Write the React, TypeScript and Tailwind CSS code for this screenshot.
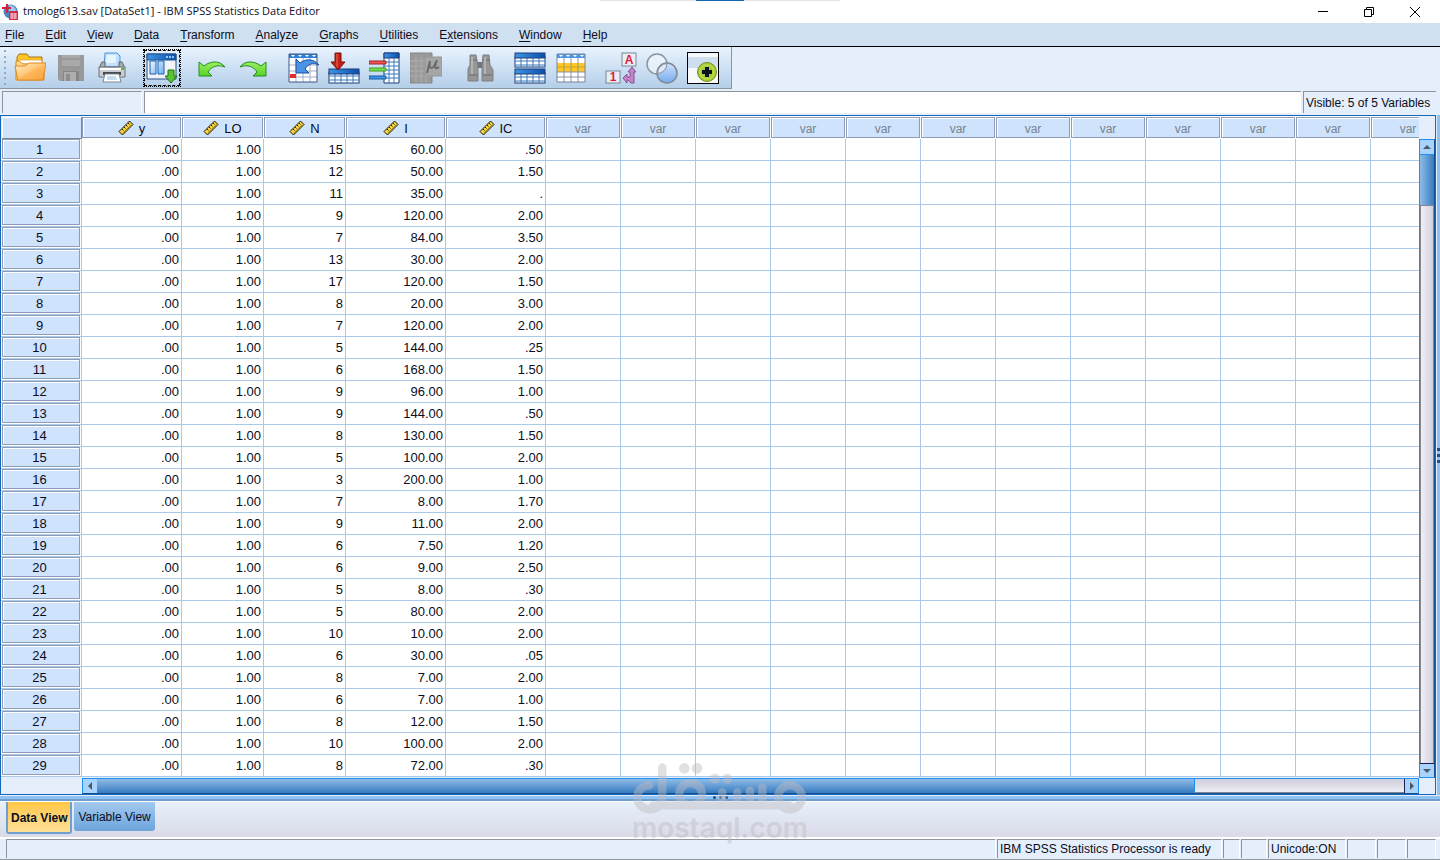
import type { ReactNode } from "react";

type DataRow = [string, string, string, string, string];

interface Column {
  name: string;
  colClass: string;
}

const COLUMNS: Column[] = [
  { name: "y", colClass: "w-[100px]" },
  { name: "LO", colClass: "w-[82px]" },
  { name: "N", colClass: "w-[82px]" },
  { name: "I", colClass: "w-[100px]" },
  { name: "IC", colClass: "w-[100px]" },
];

const EMPTY_COLUMNS = Array.from({ length: 12 }, (_, i) => i);

const ROWS: DataRow[] = [
  [".00", "1.00", "15", "60.00", ".50"],
  [".00", "1.00", "12", "50.00", "1.50"],
  [".00", "1.00", "11", "35.00", "."],
  [".00", "1.00", "9", "120.00", "2.00"],
  [".00", "1.00", "7", "84.00", "3.50"],
  [".00", "1.00", "13", "30.00", "2.00"],
  [".00", "1.00", "17", "120.00", "1.50"],
  [".00", "1.00", "8", "20.00", "3.00"],
  [".00", "1.00", "7", "120.00", "2.00"],
  [".00", "1.00", "5", "144.00", ".25"],
  [".00", "1.00", "6", "168.00", "1.50"],
  [".00", "1.00", "9", "96.00", "1.00"],
  [".00", "1.00", "9", "144.00", ".50"],
  [".00", "1.00", "8", "130.00", "1.50"],
  [".00", "1.00", "5", "100.00", "2.00"],
  [".00", "1.00", "3", "200.00", "1.00"],
  [".00", "1.00", "7", "8.00", "1.70"],
  [".00", "1.00", "9", "11.00", "2.00"],
  [".00", "1.00", "6", "7.50", "1.20"],
  [".00", "1.00", "6", "9.00", "2.50"],
  [".00", "1.00", "5", "8.00", ".30"],
  [".00", "1.00", "5", "80.00", "2.00"],
  [".00", "1.00", "10", "10.00", "2.00"],
  [".00", "1.00", "6", "30.00", ".05"],
  [".00", "1.00", "8", "7.00", "2.00"],
  [".00", "1.00", "6", "7.00", "1.00"],
  [".00", "1.00", "8", "12.00", "1.50"],
  [".00", "1.00", "10", "100.00", "2.00"],
  [".00", "1.00", "8", "72.00", ".30"],
];

// [mnemonic prefix, underlined letter, rest]
const MENUS: [string, string, string][] = [
  ["", "F", "ile"],
  ["", "E", "dit"],
  ["", "V", "iew"],
  ["", "D", "ata"],
  ["", "T", "ransform"],
  ["", "A", "nalyze"],
  ["", "G", "raphs"],
  ["", "U", "tilities"],
  ["E", "x", "tensions"],
  ["", "W", "indow"],
  ["", "H", "elp"],
];

const Icon = ({ children }: { children: ReactNode }) => (
  <svg width="32" height="32" viewBox="0 0 32 32" aria-hidden="true">
    {children}
  </svg>
);

const Gradients = () => (
  <svg width="0" height="0" className="absolute" aria-hidden="true">
    <defs>
      <linearGradient id="folder" x1="0" y1="0" x2="1" y2="1">
        <stop offset="0" stopColor="#fff0c4" />
        <stop offset="0.5" stopColor="#ffc578" />
        <stop offset="1" stopColor="#f89a2c" />
      </linearGradient>
      <linearGradient id="blueBar" x1="0" y1="0" x2="1" y2="0">
        <stop offset="0" stopColor="#3f95e4" />
        <stop offset="1" stopColor="#0a4fae" />
      </linearGradient>
      <linearGradient id="pane" x1="0" y1="0" x2="1" y2="1">
        <stop offset="0" stopColor="#eef7ff" />
        <stop offset="1" stopColor="#6fb3ee" />
      </linearGradient>
      <linearGradient id="leaf" x1="0" y1="0" x2="0" y2="1">
        <stop offset="0" stopColor="#9bf060" />
        <stop offset="1" stopColor="#55d326" />
      </linearGradient>
      <linearGradient id="lens" x1="0" y1="0" x2="0" y2="1">
        <stop offset="0" stopColor="#cfe2fc" />
        <stop offset="1" stopColor="#6ea6ee" />
      </linearGradient>
    </defs>
  </svg>
);

const OpenIcon = () => (
  <Icon>
    <path d="M3 7V5l2-3h8l2 3h13v8H3z" fill="#ffc526" stroke="#a87512" />
    <path d="M5 8h22l2 4H4z" fill="#fff" stroke="#d8a13a" strokeWidth=".7" />
    <path d="M2 9h3l4 3h21v16H2z" fill="#ffd98c" stroke="#d98918" />
    <path d="M1 14h10l4-3h17l-3 17H4z" fill="url(#folder)" stroke="#df8a20" />
    <path d="M5 26L30 12l-2 15H5z" fill="#ffab42" opacity=".45" />
  </Icon>
);

const SaveIcon = () => (
  <Icon>
    <path d="M3 3h26v26H5l-2-2z" fill="#999" />
    <path d="M7 3h18v12H7z" fill="#a9a9a9" />
    <path d="M7 7h18M7 15h18" stroke="#8b8b8b" />
    <path d="M8 19h16v10H8z" fill="#858585" />
    <path d="M9 20h12v9H9z" fill="#adadad" />
    <path d="M11 22h4v7h-4z" fill="#8d8d8d" />
  </Icon>
);

const PrintIcon = () => (
  <Icon>
    <path d="M9 1h12l3 3v11H8z" fill="#bfe1ff" stroke="#4b95d8" />
    <path d="M11 3h9v8H10z" fill="#e8f5ff" />
    <path d="M6 10h3v5h14v-5h3l3 6H3z" fill="#a9adb2" stroke="#60656b" />
    <path d="M3 15h26v10H3z" fill="#c9ccd0" stroke="#70757b" />
    <path d="M4 17h24" stroke="#fff" strokeWidth="2" />
    <path d="M7 20h18v3H7z" fill="#45494e" />
    <path d="M25 17h3" stroke="#43c62d" strokeWidth="2" />
    <path d="M9 22h14l2 8H7z" fill="#fff" stroke="#7d8892" />
    <path d="M11 25h9M11 27h10" stroke="#8fbce3" />
  </Icon>
);

const RecallIcon = () => (
  <Icon>
    <path d="M1 2h29v25H1z" fill="#f1f3f8" stroke="#245187" />
    <path d="M1 2h29v6H1z" fill="url(#blueBar)" stroke="#245187" />
    <path d="M20 5h2m1 0h2m1 0h2" stroke="#8fc4f5" strokeWidth="2" />
    <path d="M4 9h6v13H4zM12 9h6v13h-6z" fill="url(#pane)" stroke="#1763b6" />
    <path d="M22 18h6v6h3l-6 7-6-7h3z" fill="#5bc234" stroke="#177317" />
  </Icon>
);

const UndoIcon = () => (
  <Icon>
    <path
      d="M3 10v14h13l-4-4c3-5 9-8 17-5-5-7-15-6-21-1z"
      fill="url(#leaf)"
      stroke="#248c24"
    />
  </Icon>
);

const RedoIcon = () => (
  <Icon>
    <path
      d="M29 10v14H16l4-4C17 15 11 12 3 15c5-7 15-6 21-1z"
      fill="url(#leaf)"
      stroke="#248c24"
    />
  </Icon>
);

const GotoIcon = () => (
  <Icon>
    <path d="M2 2h28v28H2z" fill="#fff" />
    <path d="M2 2h28v4H2z" fill="#2e82d6" />
    <path d="M4 3h4L6 5zM11 3h4l-2 2zM18 3h4l-2 2zM25 3h4l-2 2z" fill="#fff" />
    <path d="M9 6v24M16 6v24M23 6v24M2 13h28M2 19h28M2 25h28" stroke="#a6aec6" />
    <path d="M2 2h28v28H2z" fill="none" stroke="#3c5684" />
    <path d="M3 22h6v4H3z" fill="#e62b2b" />
    <path
      d="M9 7v14h13l-4-4c3-5 8-7 14-4-5-6-13-7-19-2z"
      fill="#4a94e8"
      stroke="#1b4f9a"
    />
  </Icon>
);

const GridBody = ({ x, y, w, h }: { x: number; y: number; w: number; h: number }) => (
  <>
    <rect x={x} y={y} width={w} height={h} fill="#fff" stroke="#1d3f7a" />
    <path
      d={`M${x + 6} ${y}v${h}M${x + 12} ${y}v${h}M${x + 18} ${y}v${h}M${x + 24} ${y}v${h}M${x} ${y + 4}h${w}M${x} ${y + 8}h${w}`}
      stroke="#3978bd"
    />
  </>
);

const InsertCaseIcon = () => (
  <Icon>
    <GridBody x={1} y={20} w={30} h={11} />
    <rect x="1" y="17" width="30" height="5" fill="url(#blueBar)" stroke="#1d3f7a" />
    <path d="M7 1h6v9h4l-7 8-7-8h4z" fill="#c61f16" stroke="#701009" />
    <path d="M9 2v13" stroke="#ef6b58" />
  </Icon>
);

const InsertVarIcon = () => (
  <Icon>
    <path d="M15 1h15v30H15z" fill="#fff" stroke="#1d3f7a" />
    <path d="M15 1h15v5H15z" fill="url(#blueBar)" stroke="#1d3f7a" />
    <path d="M20 6v25M25 6v25M15 10h15M15 14h15M15 18h15M15 22h15M15 26h15" stroke="#3978bd" />
    <path d="M0 9h17v3H0z" fill="#ef5948" stroke="#a51d30" />
    <path d="M0 16h17v3H0z" fill="#7ae04e" stroke="#3a9d20" />
    <path d="M0 24h17v3H0z" fill="#3d97e6" stroke="#1759a5" />
  </Icon>
);

const StatsIcon = () => (
  <Icon>
    <path d="M0 1h22v30H0z" fill="#9a9a9a" stroke="#858585" />
    <path d="M6 5v26M11 5v26M16 5v26M0 9h22M0 14h22M0 19h22M0 24h22" stroke="#adadad" />
    <path d="M15 5h17v19H15z" fill="#a6a6a6" stroke="#969696" />
    <path d="M20 9l-3 12m3-12c-2 9 3 9 6 1m1-2c-3 8-2 10 2 7" fill="none" stroke="#6a6a6a" strokeWidth="2" />
  </Icon>
);

const FindIcon = () => (
  <Icon>
    <path d="M13 10h7v6h-7z" fill="#747474" />
    <path d="M6 3h6l2 11v15H4V17l2-4zM19 3h6l1 10 3 5v11H18V14z" fill="#969696" stroke="#7e7e7e" />
    <path d="M6 8h7M19 8h7M5 23h9M19 23h9" stroke="#6d6d6d" />
    <path d="M8 5v17M21 5v17" stroke="#b3b3b3" strokeWidth="2" />
  </Icon>
);

const SplitIcon = () => (
  <Icon>
    <GridBody x={1} y={5} w={30} h={10} />
    <rect x="1" y="1" width="30" height="5" fill="url(#blueBar)" stroke="#1d3f7a" />
    <GridBody x={1} y={21} w={30} h={10} />
    <rect x="1" y="17" width="30" height="5" fill="url(#blueBar)" stroke="#1d3f7a" />
  </Icon>
);

const SelectIcon = () => (
  <Icon>
    <path d="M2 2h28v28H2z" fill="#fff" />
    <path d="M2 2h28v4H2z" fill="#4b98df" />
    <path d="M4 3h4L6 5zM11 3h4l-2 2zM18 3h4l-2 2zM25 3h4l-2 2z" fill="#fff" />
    <path d="M2 11h28v9H2z" fill="#ffc91e" />
    <path d="M9 6v24M16 6v24M23 6v24M2 25h28M2 20h28" stroke="#8d91a6" />
    <path d="M2 15h28" stroke="#c99d2c" />
    <path d="M2 2h28v28H2z" fill="none" stroke="#7884a4" />
  </Icon>
);

const LabelsIcon = () => (
  <Icon>
    <rect x="17" y="1" width="14" height="13" fill="#e9eef5" stroke="#7c8594" />
    <rect x="1" y="19" width="14" height="12" fill="#e9eef5" stroke="#7c8594" />
    <text x="24" y="12" textAnchor="middle" fontSize="12" fontWeight="bold" fill="#df1b3d" fontFamily="Liberation Sans, sans-serif">A</text>
    <text x="8" y="29" textAnchor="middle" fontSize="12" fontWeight="bold" fill="#df1b3d" fontFamily="Liberation Sans, sans-serif">1</text>
    <path d="M27 15l4 5h-2v11h-3l-3-3h-1v3l-4-5 4-4v3h3v-5h-2z" fill="#c582ca" stroke="#865290" />
  </Icon>
);

const SetsIcon = () => (
  <Icon>
    <circle cx="11" cy="12" r="10" fill="#eef5fd" fillOpacity=".7" stroke="#8d949c" strokeWidth="1.5" />
    <circle cx="21" cy="21" r="10" fill="url(#lens)" fillOpacity=".9" stroke="#80888f" strokeWidth="1.5" />
    <path d="M21 11.500A10 10 0 0 1 11.500 21.500A10 10 0 0 1 21 11.500z" fill="#dce9fb" stroke="#8d949c" />
  </Icon>
);

const CustomIcon = () => (
  <Icon>
    <rect x=".5" y="1.500" width="31" height="30" fill="#f7fafc" />
    <path d="M1 5h30v11H1z" fill="#cfdfef" />
    <circle cx="20" cy="20" r="9.500" fill="#a6cd32" stroke="#738d25" />
    <circle cx="20" cy="20" r="7" fill="none" stroke="#c9e461" />
    <path d="M18 15h4v3h3v4h-3v3h-4v-3h-3v-4h3z" fill="#0d1220" />
    <rect x=".5" y=".5" width="31" height="31" fill="none" stroke="#000" />
  </Icon>
);

const AppIcon = () => (
  <svg width="16" height="16" viewBox="0 0 16 16" aria-hidden="true">
    <circle cx="8.500" cy="7.500" r="7" fill="#4d86c0" />
    <path d="M7 1c4 0 7 3 7 6H7z" fill="#a3c6e4" />
    <path d="M5 0v9M0 4h9" stroke="#d8203c" strokeWidth="2" />
    <rect x="7" y="7" width="9" height="9" fill="#d4294a" />
    <path d="M8 10h7M8 12h7M8 14h7M10 9v6M13 9v6" stroke="#fff" strokeWidth=".7" />
  </svg>
);

const RulerIcon = () => (
  <svg width="16" height="16" viewBox="0 0 16 16" aria-hidden="true">
    <path d="M1 11.500L11.500 1l3.500 3.500L4.500 15z" fill="#f8d33a" stroke="#1d1a10" />
    <path d="M4 9l1.500 1.500M6 7l1.500 1.500M8 5l1.500 1.500M10 3l1.500 1.500" stroke="#1d1a10" />
    <path d="M4.500 13.500l9-9" stroke="#b08a14" />
  </svg>
);

interface ToolButtonProps {
  label: string;
  icon: ReactNode;
  focused?: boolean;
}

const ToolButton = ({ label, icon, focused }: ToolButtonProps) => (
  <button
    type="button"
    aria-label={label}
    className="flex h-10 w-[41px] items-center justify-center"
  >
    {focused ? (
      <span className="flex h-9 w-9 items-center justify-center border border-dashed border-black outline outline-dotted outline-black">
        {icon}
      </span>
    ) : (
      icon
    )}
  </button>
);

const TitleBar = () => (
  <header className="relative flex h-[23px] shrink-0 items-center bg-white px-[2px]">
    <div className="absolute top-0 left-1/2 flex h-px w-60 -translate-x-1/2 justify-center bg-[#e4e4ea]">
      <div className="w-12 bg-[#1465b8]" />
    </div>
    <AppIcon />
    <h1 className="ml-[5px] font-['Open_Sans',sans-serif] text-[11px]">
      tmolog613.sav [DataSet1] - IBM SPSS Statistics Data Editor
    </h1>
    <div className="ml-auto flex">
      <button type="button" aria-label="Minimize" className="flex w-[46px] justify-center">
        <svg width="12" height="12" viewBox="0 0 12 12"><path d="M1 5.500h10" stroke="#000" /></svg>
      </button>
      <button type="button" aria-label="Restore" className="flex w-[46px] justify-center">
        <svg width="12" height="12" viewBox="0 0 12 12"><path d="M1.500 3.500h7v7h-7zM3.500 3V1.500h7v7H9" fill="none" stroke="#000" /></svg>
      </button>
      <button type="button" aria-label="Close" className="flex w-[46px] justify-center">
        <svg width="12" height="12" viewBox="0 0 12 12"><path d="M1 1l10 10M11 1L1 11" stroke="#000" /></svg>
      </button>
    </div>
  </header>
);

const MenuBar = () => (
  <nav className="flex h-6 shrink-0 items-center gap-[21px] border-b border-black bg-[#cfe0f1] pl-[5px]">
    {MENUS.map(([before, key, after]) => (
      <button key={before + key + after} type="button">
        {before}
        <span className="underline underline-offset-2">{key}</span>
        {after}
      </button>
    ))}
  </nav>
);

const ToolBar = () => (
  <div className="flex h-[42px] shrink-0">
    <div
      role="toolbar"
      className="flex items-center gap-[9px] border-r border-b border-[#8f959c] bg-linear-to-b from-[#e9f3fe] to-[#b4cfe9] pr-2"
    >
      <div className="-mr-[9px] flex h-full w-[9px] flex-col items-center justify-evenly">
        {[0, 1, 2, 3, 4, 5, 6].map((dot) => (
          <span key={dot} className="size-[2px] bg-[#93a9c4]" />
        ))}
      </div>
      <div className="flex">
        <ToolButton label="Open" icon={<OpenIcon />} />
        <ToolButton label="Save" icon={<SaveIcon />} />
        <ToolButton label="Print" icon={<PrintIcon />} />
      </div>
      <ToolButton label="Recall dialogs" icon={<RecallIcon />} focused />
      <div className="flex">
        <ToolButton label="Undo" icon={<UndoIcon />} />
        <ToolButton label="Redo" icon={<RedoIcon />} />
      </div>
      <div className="flex">
        <ToolButton label="Go to case" icon={<GotoIcon />} />
        <ToolButton label="Insert case" icon={<InsertCaseIcon />} />
        <ToolButton label="Insert variable" icon={<InsertVarIcon />} />
        <ToolButton label="Descriptives" icon={<StatsIcon />} />
      </div>
      <div className="ml-1">
        <ToolButton label="Find" icon={<FindIcon />} />
      </div>
      <div className="flex">
        <ToolButton label="Split file" icon={<SplitIcon />} />
        <ToolButton label="Select cases" icon={<SelectIcon />} />
      </div>
      <div className="flex">
        <ToolButton label="Value labels" icon={<LabelsIcon />} />
        <ToolButton label="Variable sets" icon={<SetsIcon />} />
        <ToolButton label="Customize toolbar" icon={<CustomIcon />} />
      </div>
    </div>
  </div>
);

const CellEditor = () => (
  <div className="flex h-[26px] shrink-0 gap-[2px] pt-[2px] pr-1 pb-[2px] pl-[2px]">
    <div className="w-[140px] border-t border-l border-r border-[#8f959c] border-r-white" />
    <input
      type="text"
      aria-label="Cell value"
      className="min-w-0 flex-1 border-t border-l border-[#8f959c] bg-white px-1 outline-none"
    />
    <div className="flex w-[133px] items-center border-t border-l border-[#8f959c] px-[2px] whitespace-nowrap">
      Visible: 5 of 5 Variables
    </div>
  </div>
);

const HEAD_BOX =
  "mr-px flex h-[21px] items-center justify-center border border-[#8e9cb8] bg-[#cfe3fc] shadow-[inset_1px_1px_0_#fff]";
const ROW_BOX =
  "mx-px h-5 border border-[#8e9cb8] bg-[#cfe3fc] pr-[3px] text-center leading-[19px] shadow-[inset_1px_1px_0_#fff]";
const CELL = "border-r border-b border-[#abc9e9] bg-white p-0";

const DataGrid = () => (
  <div className="min-h-0 flex-1 overflow-hidden">
    <table className="w-[1445px] table-fixed border-separate border-spacing-0 text-[13px]">
      <colgroup>
        <col className="w-[81px]" />
        {COLUMNS.map((column) => (
          <col key={column.name} className={column.colClass} />
        ))}
        {EMPTY_COLUMNS.map((i) => (
          <col key={i} className="w-[75px]" />
        ))}
      </colgroup>
      <thead>
        <tr className="h-[23px]">
          <td className="p-0">
            <div className="ml-px h-[22px] border-r border-b border-[#7e8797] bg-[#cfe3fc] shadow-[inset_1px_1px_0_#fff]" />
          </td>
          {COLUMNS.map((column) => (
            <th key={column.name} scope="col" className="bg-white p-0 font-normal">
              <div className={HEAD_BOX}>
                <RulerIcon />
                <span className="ml-[5px] pt-[3px] leading-4">{column.name}</span>
              </div>
            </th>
          ))}
          {EMPTY_COLUMNS.map((i) => (
            <th key={i} scope="col" className="bg-white p-0 text-xs font-normal text-[#76838f]">
              <div className={`${HEAD_BOX} pt-[2px]`}>var</div>
            </th>
          ))}
        </tr>
      </thead>
      <tbody>
        {ROWS.map((row, index) => (
          <tr key={index} className="h-[22px]">
            <th scope="row" className={`${CELL} align-top font-normal`}>
              <div className={ROW_BOX}>{index + 1}</div>
            </th>
            {row.map((value, i) => (
              <td key={i} className={`${CELL} pr-[2px] text-right leading-5`}>
                {value}
              </td>
            ))}
            {EMPTY_COLUMNS.map((i) => (
              <td key={i} className={CELL} />
            ))}
          </tr>
        ))}
      </tbody>
    </table>
  </div>
);

const VerticalScroll = () => (
  <div className="flex w-4 shrink-0 flex-col pt-[23px]">
    <div className="flex min-h-0 flex-1 flex-col border border-[#1e8ff5] border-r-[#14508f] bg-[#e0e0ec]">
      <button type="button" aria-label="Scroll up" className="flex h-[14px] items-center justify-center bg-[#a9d2fc]">
        <svg width="10" height="6" viewBox="0 0 10 6"><path d="M1 5l4-4 4 4z" fill="#4c5a63" /></svg>
      </button>
      <div className="h-[8%] border-t border-[#1e8ff5] bg-linear-to-r from-[#8ebce6] to-[#367cc1]" />
      <div className="flex-1 border-x border-t border-[#83868e] bg-linear-to-r from-[#f0f0f6] to-[#d2d0dd]" />
      <button type="button" aria-label="Scroll down" className="flex h-[14px] items-center justify-center border-t border-[#1b2148] bg-[#a9d2fc]">
        <svg width="10" height="6" viewBox="0 0 10 6"><path d="M1 1l4 4 4-4z" fill="#4c5a63" /></svg>
      </button>
    </div>
  </div>
);

const HorizontalScroll = () => (
  <div className="flex h-4 shrink-0 pr-4 pl-[81px]">
    <div className="flex min-w-0 flex-1 border border-[#1e8ff5] border-b-[#14508f] bg-[#e0e0ec]">
      <button type="button" aria-label="Scroll left" className="flex w-[14px] items-center justify-center bg-[#a9d2fc]">
        <svg width="6" height="10" viewBox="0 0 6 10"><path d="M5 1L1 5l4 4z" fill="#4c5a63" /></svg>
      </button>
      <div className="flex-[84] bg-linear-to-b from-[#8ebce6] to-[#367cc1]" />
      <div className="flex-[16] border-b border-l border-[#83868e] border-l-[#1e8ff5] bg-linear-to-b from-[#cfcedb] to-[#eeedf3]" />
      <button type="button" aria-label="Scroll right" className="flex w-[14px] items-center justify-center border-l border-[#1b2148] bg-[#a9d2fc]">
        <svg width="6" height="10" viewBox="0 0 6 10"><path d="M1 1l4 4-4 4z" fill="#4c5a63" /></svg>
      </button>
    </div>
  </div>
);

const ViewTabs = () => (
  <div className="flex h-9 shrink-0 items-start gap-[2px] border-t border-white bg-linear-to-b from-[#e6f0fb] to-[#dadae8] pl-[6px]">
    <button
      type="button"
      className="h-8 rounded-b-[3px] border-x-2 border-b-2 border-[#6f9fce] bg-linear-to-b from-[#ffc742] to-[#ffdf96] px-[3px] pt-[2px] font-bold"
    >
      Data View
    </button>
    <button
      type="button"
      className="h-[29px] rounded-b-[3px] bg-linear-to-b from-[#a2c9ee] to-[#6da4dc] px-1"
    >
      Variable View
    </button>
  </div>
);

const STATUS_CELL = "flex items-center border-t border-l border-r border-[#8f959c] border-r-white px-[2px]";

const StatusBar = () => (
  <footer className="flex h-[23px] shrink-0 gap-px border-b border-[#8f959c] pt-[2px] pr-1 pb-px pl-[6px] shadow-[inset_0_2px_0_#fff]">
    <div className={`${STATUS_CELL} flex-1`} />
    <div className={`${STATUS_CELL} w-[225px]`}>IBM SPSS Statistics Processor is ready</div>
    <div className={`${STATUS_CELL} w-[17px]`} />
    <div className={`${STATUS_CELL} w-[26px]`} />
    <div className={`${STATUS_CELL} w-[78px]`}>Unicode:ON</div>
    <div className={`${STATUS_CELL} w-[29px]`} />
    <div className={`${STATUS_CELL} w-[29px]`} />
    <div className={`${STATUS_CELL} w-[29px]`} />
  </footer>
);

const Watermark = () => (
  <div className="pointer-events-none absolute bottom-[18px] left-1/2 flex -translate-x-1/2 flex-col items-center text-[#bfbcc2] opacity-45">
    <svg width="176" height="54" viewBox="96 60 528 162" aria-hidden="true">
      <g fill="none" stroke="currentColor" strokeWidth="25" strokeLinecap="round">
        <path d="M187 82v84M148 136a36 36 0 0 0 0 72q39 0 39-42M160 196H568" />
        <circle cx="272" cy="163" r="34" />
        <circle cx="570" cy="172" r="36" />
        <path d="M367 157v30M412 157v30M450 152v35M487 142v45" />
      </g>
      <g fill="currentColor">
        <circle cx="253" cy="85" r="16" />
        <circle cx="291" cy="85" r="16" />
        <circle cx="345" cy="116" r="15" />
        <circle cx="382" cy="116" r="15" />
      </g>
    </svg>
    <span className="font-['Inter',sans-serif] text-[28px] leading-7 font-semibold">mostaql.com</span>
  </div>
);

export default function App() {
  return (
    <div className="relative flex h-screen flex-col overflow-hidden bg-[#e4effb] font-['Liberation_Sans',Arial,sans-serif] text-xs text-[#0c0c1c]">
      <Gradients />
      <TitleBar />
      <MenuBar />
      <ToolBar />
      <CellEditor />
      <main className="flex min-h-0 flex-1">
        <div className="flex min-w-0 flex-1 flex-col border border-[#1467b8]">
          <div className="flex min-h-0 flex-1">
            <div className="flex min-w-0 flex-1 flex-col">
              <DataGrid />
            </div>
            <VerticalScroll />
          </div>
          <HorizontalScroll />
        </div>
        <div className="ml-px flex w-[3px] flex-col items-center justify-center gap-[3px] bg-[#8fc1f3]">
          <span className="size-[3px] bg-[#1f4f85]" />
          <span className="size-[3px] bg-[#1f4f85]" />
          <span className="size-[3px] bg-[#1f4f85]" />
        </div>
      </main>
      <div className="mt-px flex h-[5px] shrink-0 items-center justify-center gap-[3px] border-b-2 border-[#6d9ecf] bg-[#8fc1f3]">
        <span className="size-[3px] rounded-full bg-[#1f4f85]" />
        <span className="size-[3px] rounded-full bg-[#1f4f85]" />
        <span className="size-[3px] rounded-full bg-[#1f4f85]" />
      </div>
      <ViewTabs />
      <StatusBar />
      <Watermark />
    </div>
  );
}
